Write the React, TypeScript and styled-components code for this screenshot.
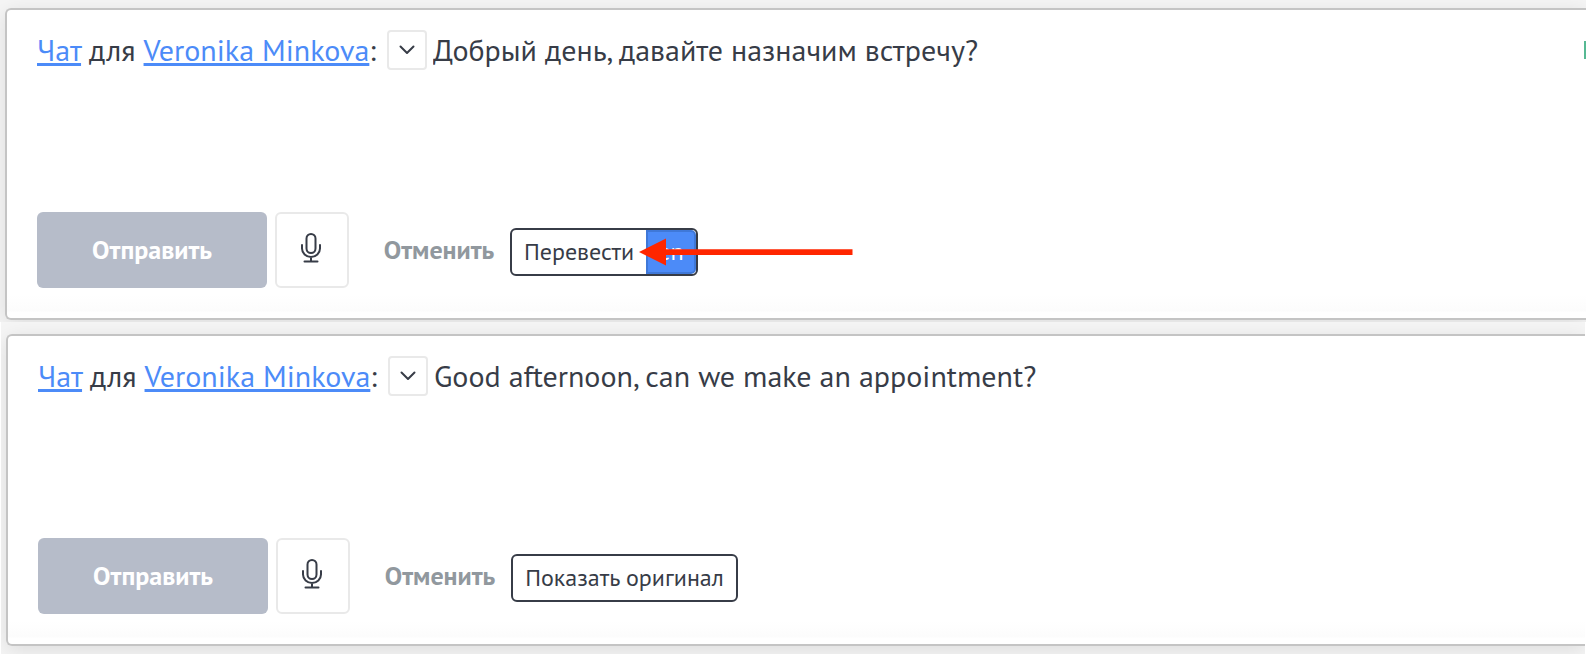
import React, { useState } from "react";
import styled, { createGlobalStyle } from "styled-components";

const GlobalStyle = createGlobalStyle`
  *, *::before, *::after { box-sizing: border-box; }
  body {
    margin: 0;
    background: #ffffff;
    color: #373c47;
    font-family: "PT Sans", "Noto Sans", sans-serif;
    font-size: 30px;
  }
  button, input, select { font: inherit; color: inherit; }
`;

const Page = styled.main`
  display: flex;
  flex-direction: column;
  overflow: hidden;
`;

const Strip = styled.section<{ $inset?: boolean }>`
  overflow: hidden;
  margin: ${(p) => (p.$inset ? "0 1px" : "0")};
  padding: ${(p) => (p.$inset ? "12px 0 8px 5px" : "8px 0 2px 5px")};
  background: #f5f5f5;
`;

const Card = styled.form`
  display: flex;
  flex-direction: column;
  justify-content: space-between;
  min-height: 312px;
  padding: 20px 0 30px 30px;
  border: 2px solid #c4c4c4;
  border-right: 0;
  border-radius: 6px 0 0 6px;
  background: linear-gradient(#ffffff 0 285px, #fcfcfc 301px, #ffffff 302px);
  box-shadow: 0 4px 20px rgba(0, 0, 0, 0.1);
`;

const Message = styled.div`
  display: flex;
  align-items: center;
  height: 40px;
`;

const Recipient = styled.p`
  flex: none;
  width: 350px;
  margin: 0;
  line-height: 40px;
  white-space: nowrap;
`;

const TextLink = styled.a`
  color: #4c8bf8;
  text-decoration: underline;
  text-decoration-thickness: 3px;
  text-underline-offset: 2px;
  text-decoration-skip-ink: none;
`;

const PickerButton = styled.button`
  flex: none;
  display: grid;
  place-items: center;
  width: 40px;
  height: 40px;
  padding: 0;
  border: 2px solid #e9e9e9;
  border-radius: 4px;
  background: #ffffff;
`;

const MessageInput = styled.input`
  flex: 1;
  min-width: 0;
  height: 40px;
  padding: 0 0 2px 6px;
  border: 0;
  outline: 0;
  background: transparent;
`;

const StatusMark = styled.span`
  flex: none;
  width: 2px;
  height: 18px;
  background: #56b993;
`;

const Toolbar = styled.div`
  display: flex;
  align-items: center;
`;

const SendButton = styled.button`
  width: 230px;
  height: 76px;
  padding: 0 0 2px;
  border: 0;
  border-radius: 6px;
  background: #b6bcc9;
  color: #ffffff;
  font-size: 26px;
  font-weight: 700;
`;

const MicButton = styled.button`
  display: grid;
  place-items: center;
  width: 74px;
  height: 76px;
  margin-left: 8px;
  padding: 0 2px 4px 0;
  border: 2px solid #e9e9e9;
  border-radius: 6px;
  background: #ffffff;
`;

const CancelButton = styled.button`
  width: 112px;
  margin: 0 15px 0 34px;
  padding: 0 0 2px;
  border: 0;
  background: transparent;
  color: #91989e;
  font-size: 26px;
  font-weight: 700;
`;

const TranslateBox = styled.div<{ $wide?: boolean }>`
  position: relative;
  display: flex;
  width: ${(p) => (p.$wide ? "227px" : "188px")};
  height: 48px;
  margin-top: 4px;
  border: 2px solid #373c47;
  border-radius: 6px;
  background: #ffffff;
`;

const TranslateButton = styled.button`
  flex: 1;
  padding: 0 0 2px;
  border: 0;
  background: transparent;
  font-size: 24px;
  white-space: nowrap;
`;

const LanguageButton = styled.button`
  width: 50px;
  padding: 0 0 2px;
  border: 2px solid #3f78d8;
  border-radius: 0 5px 5px 0;
  background: #4c8bf8;
  color: #ffffff;
  font-size: 24px;
`;

const Pointer = styled.svg`
  position: absolute;
  top: 8px;
  left: 127px;
  pointer-events: none;
`;

const Chevron = () => (
  <svg width="16" height="10" viewBox="0 0 16 10" fill="none" stroke="#373c47" strokeWidth="2" strokeLinecap="round" strokeLinejoin="round" aria-hidden="true">
    <path d="M1.5 1.5 8 8l6.500-6.500" />
  </svg>
);

const Microphone = () => (
  <svg width="20" height="30" viewBox="0 0 20 30" fill="none" stroke="#373c47" strokeWidth="2" strokeLinecap="round" aria-hidden="true">
    <rect x="5.500" y="1" width="9" height="19" rx="4.500" />
    <path d="M1 12v3.500a9 8.500 0 0 0 18 0V12M10 24v4.500M3.500 28.500h13" />
  </svg>
);

const Arrow = () => (
  <Pointer width="214" height="28" viewBox="0 0 214 28" aria-hidden="true">
    <path d="M0 14 27 0.500V11.200H213.500V17H27V27.500Z" fill="#ff2600" />
  </Pointer>
);

type ChatFormProps = { text: string; status?: boolean; children: React.ReactNode };

function ChatForm({ text, status, children }: ChatFormProps) {
  const [value, setValue] = useState(text);
  return (
    <Card onSubmit={(e) => e.preventDefault()}>
      <Message>
        <Recipient>
          <TextLink href="#chat">Чат</TextLink> для <TextLink href="#contact">Veronika Minkova</TextLink>:
        </Recipient>
        <PickerButton type="button" aria-label="Выбрать получателя">
          <Chevron />
        </PickerButton>
        <MessageInput aria-label="Сообщение" value={value} onChange={(e) => setValue(e.target.value)} />
        {status && <StatusMark />}
      </Message>
      <Toolbar>
        <SendButton type="submit">Отправить</SendButton>
        <MicButton type="button" aria-label="Записать голос">
          <Microphone />
        </MicButton>
        <CancelButton type="button">Отменить</CancelButton>
        {children}
      </Toolbar>
    </Card>
  );
}

export default function App() {
  return (
    <>
      <GlobalStyle />
      <Page>
        <Strip>
          <ChatForm text="Добрый день, давайте назначим встречу?" status>
            <TranslateBox>
              <TranslateButton type="button">Перевести</TranslateButton>
              <LanguageButton type="button">en</LanguageButton>
              <Arrow />
            </TranslateBox>
          </ChatForm>
        </Strip>
        <Strip $inset>
          <ChatForm text="Good afternoon, can we make an appointment?">
            <TranslateBox $wide>
              <TranslateButton type="button">Показать оригинал</TranslateButton>
            </TranslateBox>
          </ChatForm>
        </Strip>
      </Page>
    </>
  );
}
